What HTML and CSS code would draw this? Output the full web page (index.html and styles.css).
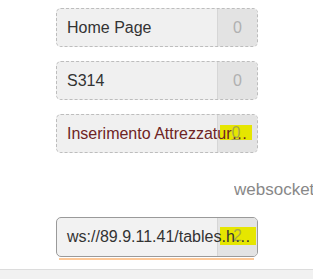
FILE: index.html
```html
<!DOCTYPE html>
<html lang="en">

<head>
    <meta charset="UTF-8">
    <meta name="viewport" content="width=device-width, initial-scale=1.0">
    <title>Pagine</title>
    <link rel="stylesheet" href="styles.css">
</head>

<body>
    <div class="page-list">
        <div class="page-item">
            <span class="page-name">Home Page</span>
            <span class="page-count">0</span>
        </div>
        <div class="page-item">
            <span class="page-name">S314</span>
            <span class="page-count">0</span>
        </div>
        <div class="page-item">
            <span class="page-name warn">Inserimento Attrezzatura Linea</span>
            <span class="page-count"><mark class="hl">0</mark></span>
        </div>

        <div class="ws-title">websocket</div>

        <div class="page-item solid">
            <span class="page-name">ws://89.9.11.41/tables.html</span>
            <span class="page-count"><mark class="hl tall">2</mark></span>
        </div>
        <div class="ws-line"></div>
    </div>
    <div class="footer-bar"></div>
</body>

</html>
```

FILE: styles.css
```css
html,
body {
    margin: 0;
    padding: 0;
    background: #fff;
    overflow: hidden;
    font-family: "Liberation Sans", Arial, sans-serif;
}

.page-list {
    width: 202px;
    margin-left: 56px;
    padding-top: 8px;
}

.page-item {
    position: relative;
    height: 39px;
    margin-bottom: 14px;
    border: 1px dashed #bdbdbd;
    border-radius: 5px;
    background: #f0f0f0;
    box-sizing: border-box;
    display: flex;
    align-items: center;
}

.page-item.solid {
    border: 1px solid #9a9a9a;
    background: #f2f2f2;
    height: 40px;
    margin-bottom: 0;
}

.page-name {
    position: relative;
    z-index: 2;
    flex: 1;
    min-width: 0;
    padding: 0 2px 0 10px;
    font-size: 16px;
    color: #333;
    white-space: nowrap;
    overflow: hidden;
    text-overflow: ellipsis;
}

.page-name.warn {
    color: #6e2424;
}

/* badge sits over the right end of the row */
.page-count {
    position: absolute;
    top: 0;
    right: 0;
    bottom: 0;
    width: 39px;
    background: #e3e3e3;
    border-left: 1px solid #d6d6d6;
    border-radius: 0 4px 4px 0;
    color: #b0b0b0;
    font-size: 16px;
    display: flex;
    align-items: center;
    justify-content: center;
}

.hl {
    display: block;
    width: 32px;
    height: 15px;
    margin-left: -3px;
    margin-top: -3px;
    line-height: 15px;
    text-align: center;
    background: #e6e600;
    color: #a7a64a;
    text-decoration: underline;
}

.hl.tall {
    width: 36px;
    height: 18px;
    line-height: 18px;
    margin-left: 0;
    margin-top: -2px;
    text-decoration: none;
}

.ws-title {
    margin: 27px 0 17px 178px;
    width: 80px;
    font-size: 17px;
    line-height: 20px;
    color: #888;
    white-space: nowrap;
    overflow: hidden;
}

.ws-line {
    height: 2px;
    margin: 1px 4px 0 3px;
    background: #fdc898;
}

.footer-bar {
    margin-top: 9px;
    height: 10px;
    background: #f1f1f1;
    border-top: 1px solid #dcdcdc;
}
```
